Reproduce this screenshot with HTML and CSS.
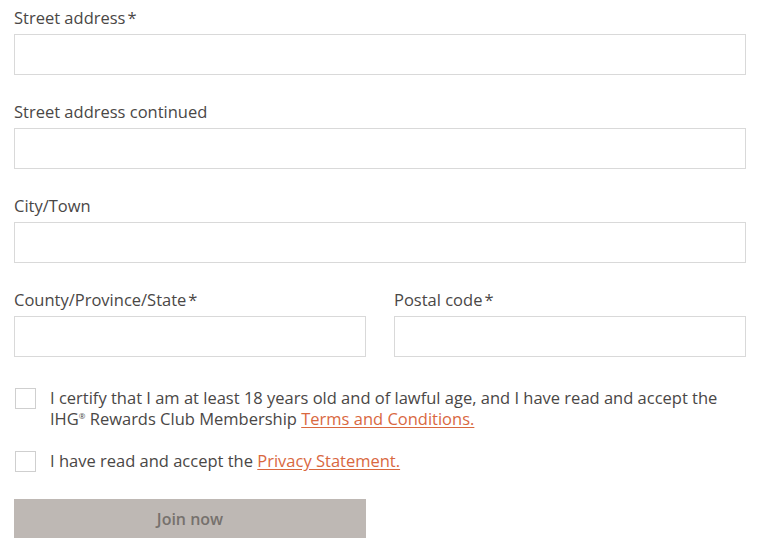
FILE: index.html
```html
<!DOCTYPE html>
<html>
<head>
<meta charset="utf-8">
<link rel="stylesheet" href="styles.css">
</head>
<body>
<form class="form">
  <div class="field">
    <label class="label">Street address<span class="req">*</span></label>
    <div class="input"></div>
  </div>
  <div class="field">
    <label class="label">Street address continued</label>
    <div class="input"></div>
  </div>
  <div class="field">
    <label class="label">City/Town</label>
    <div class="input"></div>
  </div>
  <div class="row">
    <div class="field">
      <label class="label">County/Province/State<span class="req">*</span></label>
      <div class="input"></div>
    </div>
    <div class="field">
      <label class="label">Postal code<span class="req">*</span></label>
      <div class="input"></div>
    </div>
  </div>
  <div class="check">
    <span class="box"></span>
    <p class="check-text"><span class="line">I certify that I am at least 18 years old and of lawful age, and I have read and accept the</span><span class="line">IHG<sup>®</sup> Rewards Club Membership <a class="link">Terms and Conditions.</a></span></p>
  </div>
  <div class="check check2">
    <span class="box"></span>
    <p class="check-text">I have read and accept the <a class="link">Privacy Statement.</a></p>
  </div>
  <div class="btn-row">
    <div class="btn">Join now</div>
  </div>
</form>
</body>
</html>
```
FILE: styles.css
```css
html, body {
  margin: 0;
  padding: 0;
  background: #ffffff;
}
body {
  font-family: "Open Sans", "Liberation Sans", sans-serif;
  color: #4a4746;
  font-size: 16.5px;
}
.form {
  padding: 8px 22px 0 14px;
  display: flex;
  flex-direction: column;
}
.field {
  display: flex;
  flex-direction: column;
  flex: 1;
  margin-bottom: 27px;
}
.label {
  font-size: 16.5px;
  line-height: 20px;
  height: 20px;
  margin-bottom: 6px;
}
.req {
  margin-left: 2px;
}
.input {
  height: 39px;
  border: 1px solid #d9d9d9;
  background: #fff;
}
.row {
  display: flex;
  gap: 28px;
}
.check {
  display: flex;
  align-items: flex-start;
  margin-top: 3px;
}
.check2 {
  margin-top: 21px;
}
.box {
  width: 19px;
  height: 19px;
  border: 1px solid #cfcfcf;
  margin-left: 1px;
  margin-top: 1px;
  flex: none;
}
.check-text {
  margin: 0 0 0 14px;
  font-size: 16.5px;
  line-height: 21px;
}
.line {
  display: block;
  white-space: nowrap;
}
sup {
  font-size: 8px;
  line-height: 1;
  vertical-align: 6px;
}
.link {
  color: #d9683f;
  text-decoration: underline;
  text-underline-offset: 2px;
}
.btn-row {
  margin-top: 27px;
  display: flex;
}
.btn {
  width: 352px;
  height: 39px;
  background: #beb8b4;
  color: #76716d;
  font-weight: 600;
  font-size: 16px;
  display: flex;
  align-items: center;
  justify-content: center;
}
```
